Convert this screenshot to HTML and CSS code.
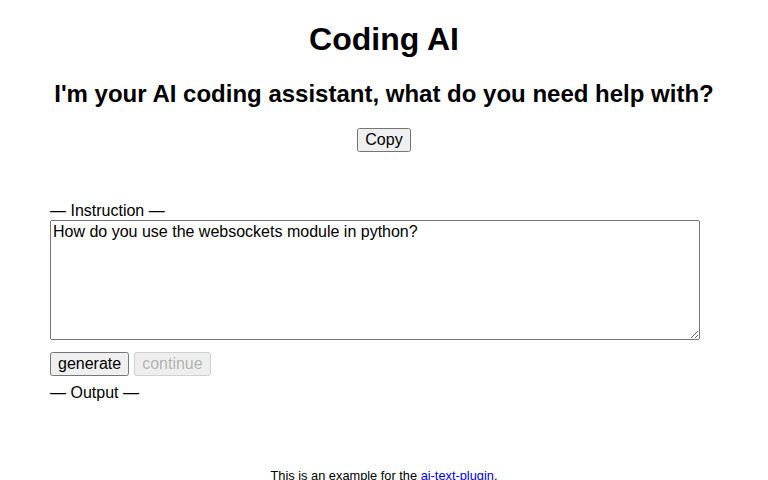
FILE: index.html
```html
<!DOCTYPE html>
<html>
<head>
<meta charset="utf-8">
<link rel="stylesheet" href="styles.css">
</head>
<body>
<h1 class="title">Coding AI</h1>
<h2 class="subtitle">I'm your AI coding assistant, what do you need help with?</h2>
<div class="copy-row"><button class="btn">Copy</button></div>
<main class="panel">
  <div class="label">— Instruction —</div>
  <textarea class="instruction">How do you use the websockets module in python?</textarea>
  <div class="actions">
    <button class="btn">generate</button>
    <button class="btn" disabled>continue</button>
  </div>
  <div class="label">— Output —</div>
  <div class="output"></div>
</main>
<footer class="footer">This is an example for the <a href="#">ai-text-plugin</a>.</footer>
</body>
</html>
```
FILE: styles.css
```css
body {
  margin: 8px;
  font-family: "Liberation Sans", Arial, sans-serif;
  font-size: 16px;
  color: #000;
  background: #fff;
}
.title {
  text-align: center;
  font-size: 32px;
  margin: 13px 0 22px;
}
.subtitle {
  text-align: center;
  font-size: 24px;
  margin: 20px 0 20px;
}
.copy-row {
  text-align: center;
}
.btn {
  font: inherit;
  font-size: 16px;
}
.panel {
  margin: 50px 0 0 42px;
  width: 656px;
}
.label {
  line-height: 18px;
}
.instruction {
  display: block;
  box-sizing: border-box;
  width: 650px;
  height: 120px;
  font: inherit;
  font-size: 16px;
  margin: 0;
}
.actions {
  margin-top: 12px;
  margin-bottom: 8px;
  display: flex;
  gap: 5px;
}
.output {
  height: 66px;
}
.footer {
  text-align: center;
  font-size: 12.8px;
}
.footer a {
  color: #0000ee;
  text-decoration: none;
}
```
